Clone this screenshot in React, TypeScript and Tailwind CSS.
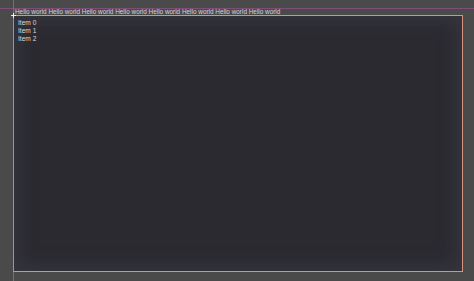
import React from 'react';

const items = ['Item 0', 'Item 1', 'Item 2'];

const App: React.FC = () => {
  return (
    <div
      className="relative flex flex-col w-[474px] h-[281px] overflow-hidden bg-[#4a4a4b] pt-[8px] pl-[13px]"
      style={{ fontFamily: '"Liberation Sans", Arial, sans-serif' }}
    >
      {/* Header text */}
      <div className="pl-[2px] h-[7px] text-[6.4px] leading-[7px] text-[#d6d4da] whitespace-nowrap">
        {Array.from({ length: 8 }).map((_, i) => (
          <span key={i}>Hello world </span>
        ))}
      </div>

      {/* Main panel */}
      <div className="flex flex-col w-[450px] h-[257px] border border-[#d8937f] bg-[#2b2a31] shadow-[inset_0_0_16px_6px_#35353e] pt-[3px] pl-[4px]">
        <ul className="flex flex-col text-[6.6px] leading-[8px] text-[#dcdadf]">
          {items.map((item) => (
            <li key={item}>{item}</li>
          ))}
        </ul>
      </div>

      {/* Debug guides */}
      <div className="absolute left-0 top-[8px] w-full h-px bg-[#8a4f86] opacity-80" />
      <div className="absolute left-[13px] top-0 w-px h-full bg-[#7d9a6a] opacity-60" />
      <div className="absolute left-[11px] top-[15px] w-[5px] h-px bg-[#f0f0f0]" />
      <div className="absolute left-[13px] top-[13px] w-px h-[5px] bg-[#f0f0f0]" />
    </div>
  );
};

export default App;
